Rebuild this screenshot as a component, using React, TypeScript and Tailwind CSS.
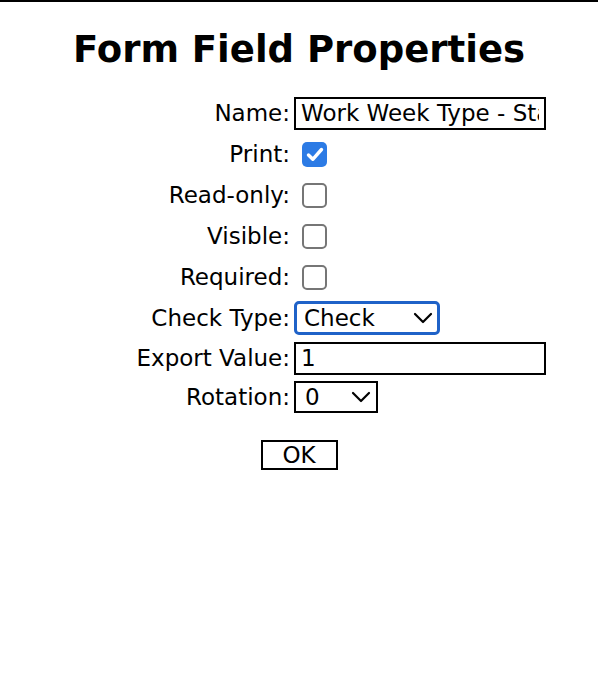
import { useState } from "react";

function Chevron() {
  return (
    <svg width="20" height="12" viewBox="0 0 20 12" fill="none" className="shrink-0">
      <path d="M2 2l8 8 8-8" stroke="#000" strokeWidth="2.2" strokeLinecap="round" strokeLinejoin="round" />
    </svg>
  );
}

function Check({ checked }: { checked: boolean }) {
  return checked ? (
    <span className="ml-2 flex h-[25px] w-[25px] items-center justify-center rounded-[5px] bg-[#2c7be5]">
      <svg width="18" height="15" viewBox="0 0 18 15" fill="none">
        <path d="M2.5 8l4.3 4.3L15.5 2.5" stroke="#fff" strokeWidth="3.4" strokeLinecap="round" strokeLinejoin="round" />
      </svg>
    </span>
  ) : (
    <span className="ml-2 block h-[25px] w-[25px] rounded-[5px] border-2 border-[#767676] bg-white" />
  );
}

function Row({ text, className = "", children }: { text: string; className?: string; children: React.ReactNode }) {
  return (
    <div className={`flex items-center ${className}`}>
      <span className="w-[294px] shrink-0 pr-1 text-right text-[23px] leading-none">{text}</span>
      {children}
    </div>
  );
}

export default function App() {
  const [name, setName] = useState("Work Week Type - Standard");
  const [exportValue, setExportValue] = useState("1");

  return (
    <div className="min-h-[682px] w-[598px] border-t-2 border-black bg-white text-black font-['DejaVu_Sans',sans-serif]">
      <h1 className="pt-[26px] text-center text-[37px] font-bold leading-[44px]">Form Field Properties</h1>

      <div className="mt-[25px] flex flex-col">
        {/* Name */}
        <Row text="Name:">
          <input
            className="h-[33px] w-[252px] border-2 border-black px-[5px] text-[23px] outline-none"
            value={name}
            onChange={(e) => setName(e.target.value)}
          />
        </Row>

        {/* checkboxes */}
        <Row text="Print:" className="mt-2 h-[33px]"><Check checked /></Row>
        <Row text="Read-only:" className="mt-2 h-[33px]"><Check checked={false} /></Row>
        <Row text="Visible:" className="mt-2 h-[33px]"><Check checked={false} /></Row>
        <Row text="Required:" className="mt-2 h-[33px]"><Check checked={false} /></Row>

        {/* Check Type */}
        <Row text="Check Type:" className="mt-[7px]">
          <div className="flex h-[34px] w-[146px] items-center justify-between rounded-[5px] border-[3px] border-[#1f62c8] pl-[7px] pr-[4px] text-[23px]">
            <span>Check</span>
            <Chevron />
          </div>
        </Row>

        {/* Export Value */}
        <Row text="Export Value:" className="mt-[7px]">
          <input
            className="h-[33px] w-[252px] border-2 border-black px-[5px] text-[23px] outline-none"
            value={exportValue}
            onChange={(e) => setExportValue(e.target.value)}
          />
        </Row>

        {/* Rotation */}
        <Row text="Rotation:" className="mt-[6px]">
          <div className="flex h-[32px] w-[84px] items-center justify-between border-2 border-black pl-[9px] pr-[5px] text-[23px]">
            <span>0</span>
            <Chevron />
          </div>
        </Row>
      </div>

      <div className="mt-[27px] flex justify-center">
        <button className="h-[30px] w-[77px] border-2 border-black bg-white text-[23px] leading-none">OK</button>
      </div>
    </div>
  );
}
